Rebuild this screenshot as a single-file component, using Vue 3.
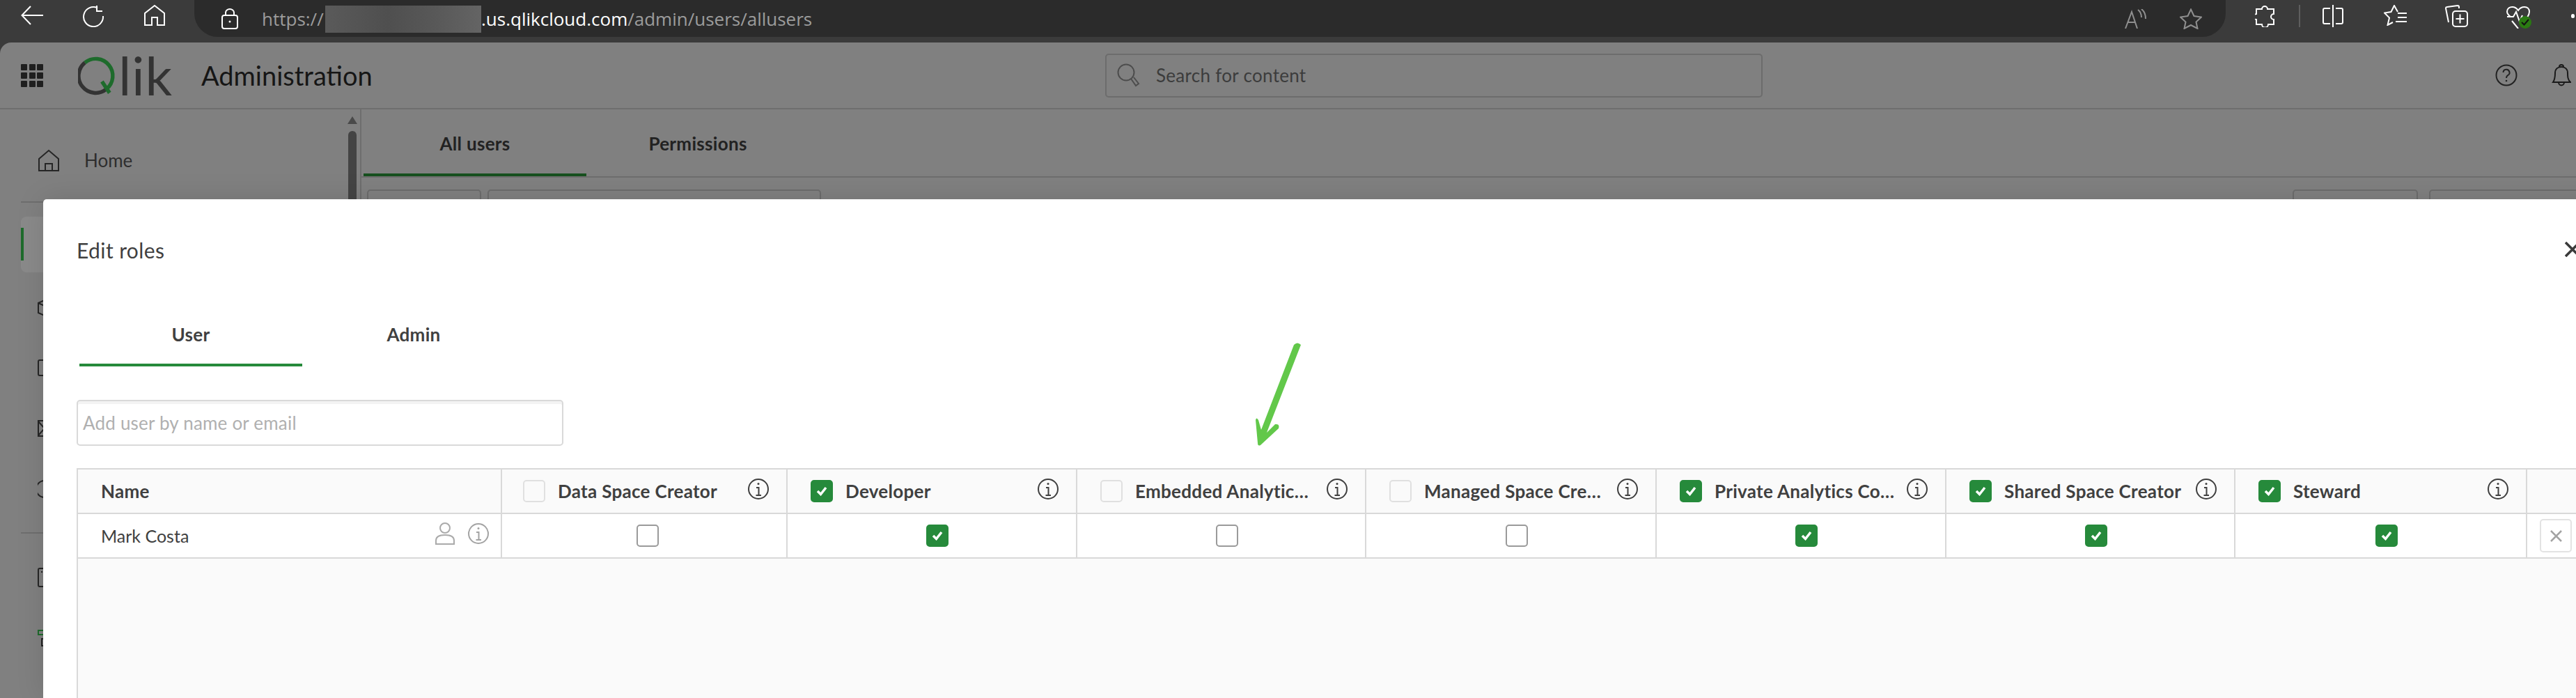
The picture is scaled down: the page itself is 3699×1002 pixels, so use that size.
<script setup>
const columns = [
  { label: 'Data Space Creator', checked: false, first: true },
  { label: 'Developer', checked: true },
  { label: 'Embedded Analytics Creator', checked: false },
  { label: 'Managed Space Creator', checked: false },
  { label: 'Private Analytics Content Creator', checked: true },
  { label: 'Shared Space Creator', checked: true },
  { label: 'Steward', checked: true }
]
</script>

<template>
  <div class="screen">
    <header class="browser">
      <svg class="b-ico back" width="32" height="28" viewBox="0 0 32 28" fill="none" stroke="#fff" stroke-width="2"><path d="M32 14H2M14 1L1.500 14L14 27"/></svg>
      <svg class="b-ico refresh" width="32" height="32" viewBox="0 0 32 32" fill="none" stroke="#fff" stroke-width="2"><path d="M22 4.500A14 14 0 1 0 30 16M21 1v8h8"/></svg>
      <svg class="b-ico home" width="30" height="30" viewBox="0 0 30 30" fill="none" stroke="#fff" stroke-width="2"><path d="M15 1L29 12V29H19V18H11V29H1V12Z"/></svg>
      <div class="urlbar">
        <svg class="lock" width="26" height="30" viewBox="0 0 26 30" fill="none" stroke="#fff" stroke-width="2"><rect x="2" y="10" width="22" height="19" rx="3"/><path d="M7 10V6a6 5 0 0 1 12 0v4"/><circle cx="13" cy="19" r="1.500" fill="#fff" stroke="none"/></svg>
        <span class="url dim scheme">https://</span>
        <span class="blurred"></span>
        <span class="url bright">.us.qlikcloud.com</span>
        <span class="url dim">/admin/users/allusers</span>
        <svg class="read" width="32" height="28" viewBox="0 0 32 28" fill="none" stroke="#8f8f8f" stroke-width="2"><path d="M2 28L11 4L19 28M5 19H16"/><path d="M20 1c4 3 5 7 5 11M25 0c4 3 6 8 6 14"/></svg>
        <svg class="star" width="32" height="30" viewBox="0 0 32 30" fill="none" stroke="#8f8f8f" stroke-width="2"><path d="M16 1.500L20.500 11L31 12.500L23.500 19.500L25.500 29L16 24L6.500 29L8.500 19.500L1 12.500L11.500 11Z"/></svg>
      </div>
      <svg class="b-ico puzzle" width="30" height="32" viewBox="0 0 30 32" fill="none" stroke="#fff" stroke-width="2"><path d="M11 6a4 4 0 0 1 8 0h9v7a4 4 0 0 0 0 8v7h-8a4 4 0 0 1-9 0H3v-7a4 4 0 0 1 0-8V6Z" transform="translate(-1 0)"/></svg>
      <span class="sep"></span>
      <svg class="b-ico split" width="30" height="32" viewBox="0 0 30 32" fill="none" stroke="#fff" stroke-width="2"><path d="M15 0V32M11 5H3a2 2 0 0 0-2 2V25a2 2 0 0 0 2 2H11M19 5H27a2 2 0 0 1 2 2V25a2 2 0 0 1-2 2H19"/></svg>
      <svg class="b-ico fav" width="33" height="30" viewBox="0 0 33 30" fill="none" stroke="#fff" stroke-width="2"><path d="M20 10L15 1L10.500 10L1 11.500L8 18.500L5.500 29L13 25M20 12H33M20 18H33M17 24H33"/></svg>
      <svg class="b-ico coll" width="33" height="32" viewBox="0 0 33 32" fill="none" stroke="#fff" stroke-width="2"><path d="M20 5V3a2 2 0 0 0-2-2L3 3a2 2 0 0 0-2 2L5 25"/><rect x="11" y="9" width="21" height="22" rx="4"/><path d="M21.500 13.500V26.500M15.500 20H27.500"/></svg>
      <span class="heart">
        <svg width="36" height="32" viewBox="0 0 36 32" fill="none" stroke="#fff" stroke-width="2"><path d="M6 15C2 12 1 9 1 7.500C1 3 5 1 8.500 1C12 1 15 3 17 6C19 3 22 1 26 1C30 1 33 3.500 33 8C33 11 32 13 30 16M1 15H10L14 8L19 22L23 13M8 21L17 32"/></svg>
        <span class="badge"><svg width="12" height="10" viewBox="0 0 12 10" fill="none" stroke="#111" stroke-width="2"><path d="M1 5L4.500 8.500L11 1"/></svg></span>
      </span>
      <span class="more"></span>
    </header>

    <div class="page">
      <div class="topbar">
        <span class="waffle"><i v-for="n in 9" :key="n"></i></span>
        <span class="logo">
          <svg width="62" height="62" viewBox="0 0 62 62" fill="none" stroke-width="6"><path d="M11 11A27 27 0 0 0 45 53" stroke="#333"/><path d="M11 11A27 27 0 1 1 45 53" stroke="#1e6b2c"/><path d="M38 41L50 59" stroke="#1e6b2c"/></svg>
          <span class="logo-text">lik</span>
        </span>
        <span class="app-title">Administration</span>
        <div class="search">
          <svg width="34" height="34" viewBox="0 0 34 34" fill="none" stroke="#4d4d4d" stroke-width="2"><circle cx="13" cy="13" r="11.500"/><path d="M20 22L27 32L31 29L24 20"/></svg>
          <span>Search for content</span>
        </div>
        <svg class="help" width="32" height="32" viewBox="0 0 32 32" fill="none" stroke="#222" stroke-width="2"><circle cx="16" cy="16" r="14.500"/><path d="M11.500 12a4.500 4.500 0 1 1 6.500 4.200c-1.500 1-2 1.800-2 3.800"/><circle cx="16" cy="24" r="1.300" fill="#222" stroke="none"/></svg>
        <svg class="bell" width="28" height="32" viewBox="0 0 28 32" fill="none" stroke="#1a1a1a" stroke-width="2"><path d="M2 26C5 22 5 18 5 13C5 7 9 4 14 4C19 4 23 7 23 13C23 18 23 22 27 26ZM11 4C11 0 17 0 17 4M10 26C10 32 18 32 18 26"/></svg>
      </div>

      <div class="content">
        <aside class="sidebar">
          <div class="nav-item">
            <svg width="30" height="32" viewBox="0 0 30 32" fill="none" stroke="#262626" stroke-width="2"><path d="M1 14L15 2L29 14V31H1ZM10 31V21H20V31"/></svg>
            <span>Home</span>
          </div>
          <hr class="nav-line">
          <div class="nav-item active"></div>
          <div class="nav-item small"><svg width="10" height="24" viewBox="0 0 10 24" fill="none" stroke="#262626" stroke-width="2"><path d="M10 2L1 6V20L10 24M1 6L10 10"/></svg></div>
          <div class="nav-item small"><svg width="10" height="24" viewBox="0 0 10 24" fill="none" stroke="#262626" stroke-width="2"><path d="M10 1H3a2 2 0 0 0-2 2V21a2 2 0 0 0 2 2H10"/></svg></div>
          <div class="nav-item small"><svg width="10" height="24" viewBox="0 0 10 24" fill="none" stroke="#262626" stroke-width="2"><path d="M10 1H1V23H10M1 2L10 12L1 22"/></svg></div>
          <div class="nav-item small"><svg width="10" height="26" viewBox="0 0 10 26" fill="none" stroke="#262626" stroke-width="2"><path d="M10 1A12 12 0 0 0 10 25"/></svg></div>
          <hr class="nav-line">
          <div class="nav-item small lower"><svg width="10" height="28" viewBox="0 0 10 28" fill="none" stroke="#262626" stroke-width="2"><path d="M10 1H3a2 2 0 0 0-2 2V25a2 2 0 0 0 2 2H10M6 5V7"/></svg></div>
          <div class="nav-item small"><svg width="10" height="24" viewBox="0 0 10 24" fill="none" stroke-width="2"><path d="M10 1H1V7H10" stroke="#1e6b2c"/><path d="M10 13H6V23H10" stroke="#262626"/></svg></div>
        </aside>

        <main class="main">
          <div class="scrollbar"><span class="arrow"></span><span class="thumb"></span></div>
          <div class="main-inner">
            <div class="main-tabs">
              <div class="main-tab on">All users</div>
              <div class="main-tab">Permissions</div>
            </div>
            <div class="toolbar">
              <span class="box b1"></span>
              <span class="box b2"></span>
              <span class="box b3"></span>
              <span class="box b4"></span>
            </div>
          </div>
        </main>
      </div>
    </div>

    <section class="modal">
      <div class="modal-head">
        <h2>Edit roles</h2>
        <svg class="close" width="22" height="22" viewBox="0 0 22 22" fill="none" stroke="#3a3a3a" stroke-width="3.500"><path d="M1 1L21 21M21 1L1 21"/></svg>
      </div>
      <div class="tabs">
        <div class="tab on">User</div>
        <div class="tab">Admin</div>
      </div>
      <div class="add-user">Add user by name or email</div>

      <div class="table">
        <div class="cell head name-head">Name</div>
        <div v-for="c in columns" :key="c.label" class="cell head col-head" :class="{ first: c.first }">
          <span class="check ghost" :class="{ on: c.checked }">
            <svg v-if="c.checked" width="16" height="14" viewBox="0 0 16 14" fill="none" stroke="#fff" stroke-width="3.500"><path d="M2 7L6.500 11.500L14 2"/></svg>
          </span>
          <span class="col-label">{{ c.label }}</span>
          <svg class="info head-info" width="30" height="32" viewBox="0 0 30 32" fill="none" stroke="#3f3f3f" stroke-width="2"><circle cx="15" cy="16" r="14"/><path d="M12 14H15.500V25M11.500 25H19"/><circle cx="15" cy="8.500" r="1.500" fill="#3f3f3f" stroke="none"/></svg>
        </div>
        <div class="cell head"></div>

        <div class="cell body name-cell">
          <span class="person-name">Mark Costa</span>
          <svg class="person" width="28" height="32" viewBox="0 0 28 32" fill="none" stroke="#aaa" stroke-width="2"><circle cx="14" cy="8" r="7"/><path d="M1 31V26C1 20 7 18 14 18C21 18 27 20 27 26V31Z"/></svg>
          <svg class="info row-info" width="30" height="32" viewBox="0 0 30 32" fill="none" stroke="#a3a3a3" stroke-width="2"><circle cx="15" cy="16" r="14"/><path d="M12 14H15.500V25M11.500 25H19"/><circle cx="15" cy="8.500" r="1.500" fill="#a3a3a3" stroke="none"/></svg>
        </div>
        <div v-for="c in columns" :key="c.label + '-row'" class="cell body check-cell" :class="{ first: c.first }">
          <span class="check" :class="{ on: c.checked }">
            <svg v-if="c.checked" width="16" height="14" viewBox="0 0 16 14" fill="none" stroke="#fff" stroke-width="3.500"><path d="M2 7L6.500 11.500L14 2"/></svg>
          </span>
        </div>
        <div class="cell body remove-cell">
          <span class="remove"><svg width="17" height="17" viewBox="0 0 17 17" fill="none" stroke="#a3a3a3" stroke-width="2.500"><path d="M1 1L16 16M16 1L1 16"/></svg></span>
        </div>
      </div>
    </section>

    <svg class="annotation" width="80" height="156" viewBox="0 0 80 156"><path d="M65 4Q70 -1 75 4L26 130L38 118Q45 117 43 124L17 148Q13 150 13 145L10 112Q11 107 14 112L18 126Z" fill="#62c84a"/></svg>
  </div>
</template>

<style scoped>
.screen {
  position: relative;
  width: 3699px;
  height: 1002px;
  overflow: hidden;
  background: #3b3b3b;
  font-family: "Lato", "Noto Sans", sans-serif;
  color: #404040;
}
.browser {
  display: flex;
  align-items: flex-start;
  height: 61px;
  background: #3b3b3b;
}
.b-ico { flex: none; margin-top: 7px; }
.back { margin-left: 30px; margin-top: 8px; }
.refresh { margin-left: 56px; }
.home { margin-left: 57px; }
.urlbar {
  flex: none;
  display: flex;
  align-items: center;
  width: 2917px;
  height: 53px;
  margin-left: 42px;
  padding-left: 38px;
  box-sizing: border-box;
  background: #2b2b2b;
  border-radius: 0 0 34px 34px;
}
.lock { flex: none; margin-right: 33px; }
.url { font-family: "Open Sans", sans-serif; font-size: 26px; white-space: nowrap; }
.scheme { flex: none; width: 91px; overflow: hidden; }
.dim { color: #9c9c9c; }
.bright { color: #fff; }
.blurred {
  flex: none;
  width: 224px;
  height: 39px;
  margin-top: 2px;
  background: linear-gradient(90deg, #5a5a5a, #4f4f4f 40%, #585858 70%, #646464);
}
.read { flex: none; margin-left: auto; }
.star { flex: none; margin-left: 48px; margin-right: 34px; }
.puzzle { margin-left: 42px; }
.sep { flex: none; width: 2px; height: 32px; margin: 7px 0 0 33px; background: #5e5e5e; }
.split { margin-left: 32px; }
.fav { margin-left: 58px; }
.coll { margin-left: 55px; }
.heart { position: relative; flex: none; width: 36px; height: 32px; margin: 9px 0 0 55px; }
.badge {
  position: absolute;
  left: 18px;
  top: 14px;
  width: 18px;
  height: 18px;
  border-radius: 50%;
  background: #2a7a12;
  display: flex;
  align-items: center;
  justify-content: center;
}
.more { flex: none; width: 5px; height: 6px; margin: 20px 0 0 57px; border-radius: 3px; background: #fff; }

.page {
  height: 941px;
  background: #808080;
  border-radius: 16px 0 0 0;
  overflow: hidden;
}
.topbar {
  display: flex;
  align-items: center;
  height: 94px;
  border-bottom: 2px solid #6e6e6e;
}
.waffle {
  flex: none;
  display: grid;
  grid-template-columns: repeat(3, 9px);
  grid-auto-rows: 9px;
  gap: 3px 2.500px;
  margin-left: 30px;
}
.waffle i { background: #1f1f1f; border-radius: 1px; }
.logo { flex: none; display: flex; align-items: center; width: 136px; margin-left: 50px; }
.logo-text { font-size: 76px; line-height: 60px; font-weight: 400; letter-spacing: 1px; color: #333; margin-left: 2px; }
.app-title { flex: none; width: 245px; margin-left: 41px; font-size: 38px; color: #161616; white-space: nowrap; }
.search {
  flex: none;
  box-sizing: border-box;
  display: flex;
  align-items: center;
  gap: 22px;
  width: 944px;
  height: 63px;
  margin-left: 1053px;
  padding-left: 15px;
  border: 2px solid #6c6c6c;
  border-radius: 5px;
  font-size: 26px;
  letter-spacing: 0.3px;
  color: #3c3c3c;
}
.help { flex: none; margin-left: 1052px; }
.bell { flex: none; margin-left: 49px; }

.content { display: flex; height: 845px; }
.sidebar { flex: none; width: 440px; padding: 33px 0 0 30px; }
.nav-item { display: flex; align-items: center; gap: 36px; height: 80px; padding-left: 25px; font-size: 26px; color: #2e2e2e; }
.nav-item.active { margin-top: 20px; height: 80px; box-sizing: border-box; background: #8a8a8a; border-radius: 8px; position: relative; width: 60px; margin-bottom: 6px; }
.nav-item.active::before { content: ""; position: absolute; left: 0; top: 16px; width: 4px; height: 47px; background: #1e6b2c; }
.nav-item.small { height: 87px; padding-left: 24px; }
.nav-item.lower { margin-top: 19px; }
.nav-line { height: 2px; margin: 19px 0 0; width: 300px; border: 0; background: #6e6e6e; }
.main { flex: 1; display: flex; min-width: 0; }
.scrollbar { flex: none; width: 47px; padding: 10px 0 0 29px; box-sizing: border-box; }
.arrow { display: block; width: 0; height: 0; border-left: 7px solid transparent; border-right: 7px solid transparent; border-bottom: 11px solid #4a4a4a; }
.thumb { display: block; width: 12px; height: 200px; margin: 10px 0 0 1px; background: #444; border-radius: 6px; }
.main-inner { flex: 1; min-width: 0; border-left: 2px solid #6e6e6e; }
.main-tabs { display: flex; height: 96px; padding-left: 3px; border-bottom: 2px solid #6e6e6e; }
.main-tab {
  box-sizing: border-box;
  width: 320px;
  height: 96px;
  padding-top: 33px;
  text-align: center;
  font-size: 26px;
  font-weight: 700;
  letter-spacing: 0.3px;
  color: #222;
  border-bottom: 4px solid transparent;
}
.main-tab.on { border-bottom-color: #17501f; }
.toolbar { display: flex; padding: 17px 0 0 8px; }
.box { flex: none; height: 60px; box-sizing: border-box; border: 2px solid #6c6c6c; border-radius: 5px; }
.b1 { width: 164px; }
.b2 { width: 479px; margin-left: 9px; }
.b3 { width: 180px; margin-left: 2113px; }
.b4 { width: 250px; margin-left: 16px; }

.modal {
  position: absolute;
  left: 62px;
  top: 286px;
  width: 3700px;
  height: 716px;
  box-sizing: border-box;
  padding: 54px 0 0 48px;
  background: #fff;
  border-radius: 5px 0 0 0;
  box-shadow: 0 0 40px rgba(0, 0, 0, 0.12);
}
.modal-head { display: flex; align-items: center; height: 38px; }
.modal-head h2 { margin: 0; font-size: 30px; font-weight: 400; letter-spacing: 0.4px; color: #404040; }
.close { position: absolute; left: 3621px; top: 61px; }
.tabs { display: flex; margin: 57px 0 0 4px; }
.tab {
  box-sizing: border-box;
  width: 320px;
  height: 91px;
  padding-top: 29px;
  text-align: center;
  font-size: 26px;
  font-weight: 700;
  letter-spacing: 0.3px;
  color: #404040;
  border-bottom: 4px solid transparent;
}
.tab.on { border-bottom-color: #268a3b; }
.add-user {
  box-sizing: border-box;
  display: flex;
  align-items: center;
  width: 699px;
  height: 66px;
  margin-top: 48px;
  padding-left: 7px;
  border: 2px solid #d9d9d9;
  border-radius: 5px;
  box-shadow: inset 0 4px 0 #f3f3f3;
  font-size: 26px;
  letter-spacing: 0.2px;
  color: #b0b0b0;
}
.table {
  display: grid;
  grid-template-columns: 609px 410px 416px 415px 417px 416px 415px 419px 72px;
  grid-template-rows: 64px 64px;
  width: 3589px;
  height: 330px;
  margin-top: 32px;
  box-sizing: border-box;
  background: #fafafa;
  border-top: 2px solid #d9d9d9;
  border-left: 2px solid #d9d9d9;
}
.cell { box-sizing: border-box; display: flex; align-items: center; min-width: 0; border-bottom: 2px solid #d9d9d9; border-right: 2px solid #d9d9d9; }
.cell:nth-child(9), .cell:nth-child(18) { border-right: 0; }
.cell.head { background: #fafafa; font-size: 26px; font-weight: 700; letter-spacing: 0.3px; color: #404040; }
.cell.body { background: #fff; }
.name-head, .name-cell { padding-left: 33px; }
.person-name { font-size: 25px; color: #404040; }
.person { flex: none; margin-left: auto; margin-top: -6px; }
.info { flex: none; margin-top: -6px; }
.head-info { margin-left: auto; }
.row-info { margin-left: 19px; margin-right: 17px; }
.col-head { padding: 0 25px 0 33px; }
.col-head.first { padding-left: 30px; }
.col-label { flex: 0 1 259px; min-width: 0; margin-left: 18px; overflow: hidden; text-overflow: ellipsis; white-space: nowrap; }
.check {
  flex: none;
  display: flex;
  align-items: center;
  justify-content: center;
  box-sizing: border-box;
  width: 32px;
  height: 32px;
  border: 2px solid #9a9a9a;
  border-radius: 5px;
  background: #fff;
}
.check.ghost { border-color: #e0e0e0; background: #fafafa; }
.check.on, .check.ghost.on { border-color: #268a3b; background: #268a3b; }
.check-cell { justify-content: center; padding-left: 16px; }
.check-cell.first { padding-left: 10px; }
.remove-cell { padding-left: 18px; }
.remove { display: flex; align-items: center; justify-content: center; box-sizing: border-box; width: 46px; height: 48px; border: 2px solid #e3e3e3; border-radius: 5px; }
.annotation { position: absolute; left: 1793px; top: 491px; }
</style>

<style>
html, body { margin: 0; padding: 0; background: #808080; }
</style>
